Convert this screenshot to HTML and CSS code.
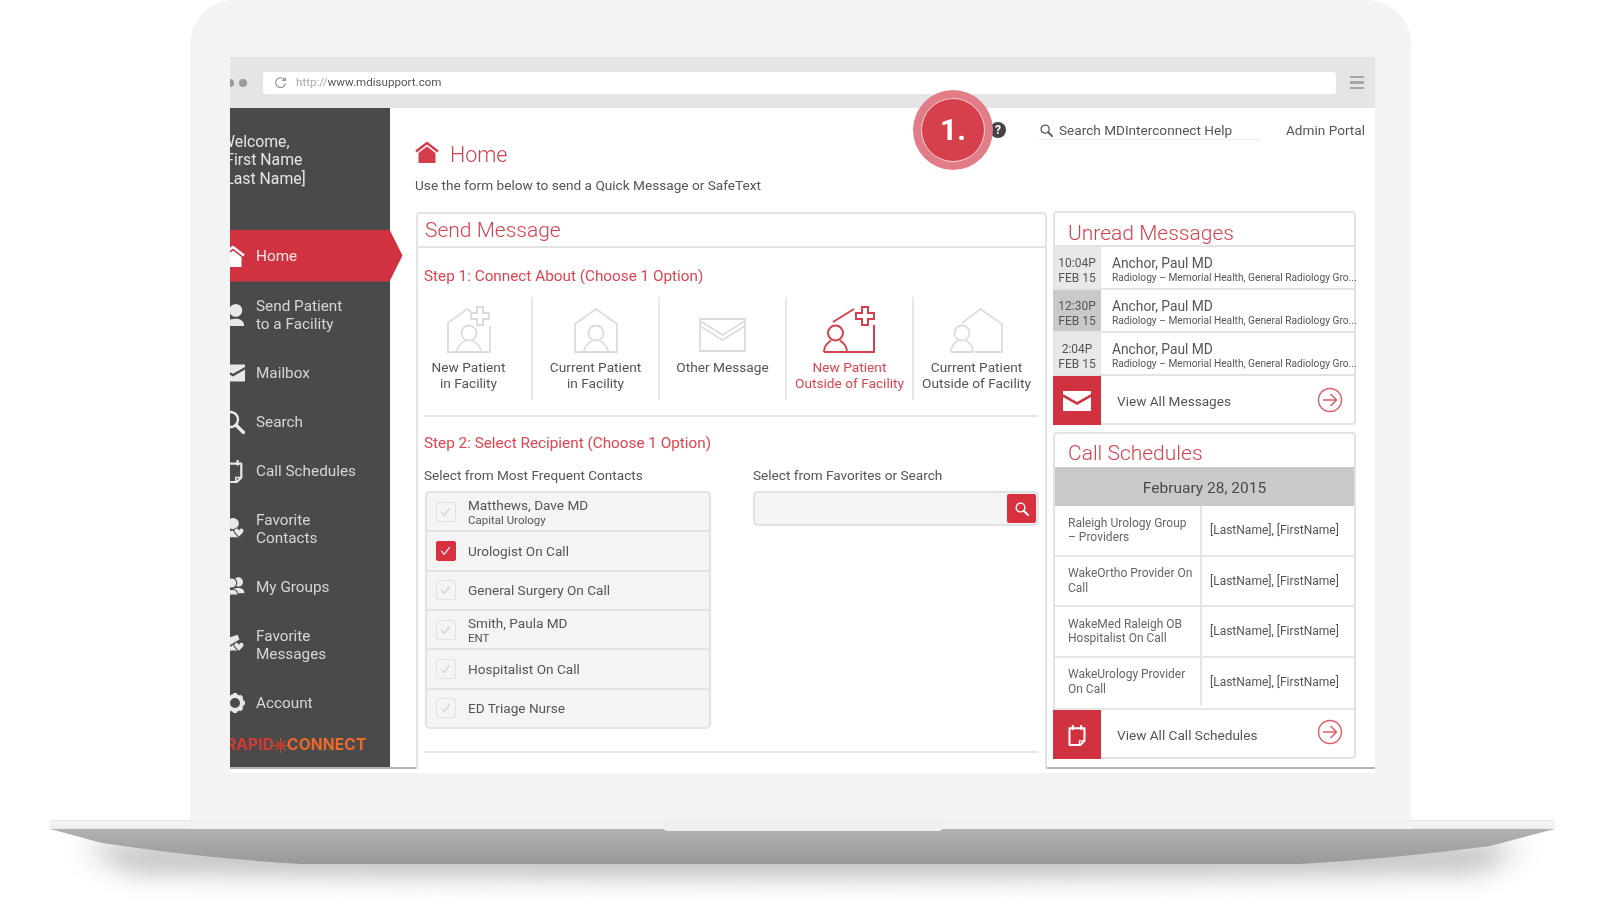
FILE: index.html
```html
<!DOCTYPE html>
<html lang="en">
<head>
<meta charset="utf-8">
<title>MDInterconnect Home</title>
<link rel="stylesheet" href="styles.css">
</head>
<body>
<svg class="defs" aria-hidden="true">
  <symbol id="home" viewBox="0 0 24 22">
    <path d="M1 10.5 12 2l11 8.500" fill="none" stroke="currentColor" stroke-width="2.400"/>
    <path d="M3.500 12 12 5.500l8.500 6.500v10h-17z" fill="currentColor"/>
  </symbol>
  <symbol id="mail" viewBox="0 0 28 20">
    <path d="M0 0h28v3L14 11 0 3z" fill="currentColor"/>
    <path d="M0 6l14 8 14-8v14H0z" fill="currentColor"/>
  </symbol>
  <symbol id="glass" viewBox="0 0 24 24">
    <circle cx="9.500" cy="9.500" r="7.500" fill="none" stroke="currentColor" stroke-width="2.400"/>
    <path d="M15 15l7.500 7.500" stroke="currentColor" stroke-width="3.400" stroke-linecap="round"/>
  </symbol>
  <symbol id="cal" viewBox="0 0 24 26">
    <path d="M3 5h18v15l-5 5H3z" fill="none" stroke="currentColor" stroke-width="2.400" stroke-linejoin="round"/>
    <path d="M7 1v6M17 1v6" stroke="currentColor" stroke-width="2.400"/>
    <path d="M15 25v-5h6" fill="none" stroke="currentColor" stroke-width="1.600"/>
  </symbol>
  <symbol id="go" viewBox="0 0 26 26">
    <circle cx="13" cy="13" r="11.500" fill="none" stroke="currentColor" stroke-width="1.400"/>
    <path d="M6 13h13M13.500 7l6 6-6 6" fill="none" stroke="currentColor" stroke-width="1.400"/>
  </symbol>
  <symbol id="person" viewBox="0 0 24 26">
    <circle cx="15" cy="8" r="7"/>
    <path d="M3 25c0-6 6-8 12-8 4 0 9 1.500 9 8z"/>
  </symbol>
  <symbol id="heart" viewBox="-1 -1 14 13">
    <path d="M6 11 .8 5.500C-1 2.500 1 0 3.200 0 4.500 0 5.500.7 6 1.800 6.500.7 7.500 0 8.800 0 11 0 13 2.500 11.200 5.500z"/>
  </symbol>
  <symbol id="tick" viewBox="0 0 20 20">
    <path d="M5 10.500l3.500 4L15 6" fill="none" stroke="currentColor" stroke-width="1.300"/>
  </symbol>
</svg>

<main class="stage">
  <div class="lid">
    <div class="screen">
      <header class="browser">
        <span class="dot"></span><span class="dot"></span>
        <div class="address">
          <svg class="reload" viewBox="0 0 14 14"><path d="M11.500 4.200A5.300 5.300 0 1 0 12.300 8M12.200 1.500v3.200H9" fill="none" stroke="#8f8f8f" stroke-width="1.200"/></svg>
          <span class="url"><span class="url-scheme">http://</span>www.mdisupport.com</span>
        </div>
        <div class="burger"><i></i><i></i><i></i></div>
      </header>

      <div class="app">
        <div class="side-wrap">
          <aside class="sidebar">
            <p class="welcome">Welcome,<br>[First Name<br>[Last Name]</p>
            <nav class="nav">
              <a class="nav-item active"><svg class="nav-icon"><use href="#home"/></svg><span>Home</span></a>
              <a class="nav-item tall"><svg class="nav-icon"><use href="#person"/></svg><span>Send Patient<br>to a Facility</span></a>
              <a class="nav-item"><svg class="nav-icon mail-nav"><use href="#mail"/></svg><span>Mailbox</span></a>
              <a class="nav-item"><svg class="nav-icon"><use href="#glass"/></svg><span>Search</span></a>
              <a class="nav-item"><svg class="nav-icon"><use href="#cal"/></svg><span>Call Schedules</span></a>
              <a class="nav-item tall"><svg class="nav-icon" viewBox="0 0 26 26"><use href="#person" width="21" height="23"/><use href="#heart" x="13" y="11" width="13" height="12" class="heart"/></svg><span>Favorite<br>Contacts</span></a>
              <a class="nav-item"><svg class="nav-icon" viewBox="0 0 28 24"><use href="#person" x="8" y="0" width="20" height="20"/><use href="#person" width="20" height="23" class="front"/></svg><span>My Groups</span></a>
              <a class="nav-item tall"><svg class="nav-icon" viewBox="0 0 26 24"><path d="M2 6l16-5 2 5-10 6zM2 9l8 5 8-5v9H2z"/><use href="#heart" x="13" y="8" width="13" height="12" class="heart"/></svg><span>Favorite<br>Messages</span></a>
              <a class="nav-item"><svg class="nav-icon" viewBox="0 0 24 24"><circle cx="14" cy="12" r="7" fill="none" stroke="currentColor" stroke-width="4"/><path d="M14 2v4M14 18v4M4 12h4M20 12h4M7 5l3 3M18 16l3 3M7 19l3-3M18 8l3-3" stroke="currentColor" stroke-width="3.600"/></svg><span>Account</span></a>
            </nav>
            <div class="logo">
              <span class="logo-a">RAPID</span>
              <svg class="sun" viewBox="0 0 16 16"><path d="M8 0v16M0 8h16M2.500 2.500l11 11M13.500 2.500l-11 11" stroke="#d9582b" stroke-width="1"/><circle cx="8" cy="8" r="4" fill="#b83a2c"/></svg>
              <span class="logo-b">CONNECT</span>
            </div>
          </aside>
        </div>

        <div class="work">
          <div class="head">
            <div class="intro">
              <div class="page-title"><svg class="title-icon"><use href="#home"/></svg><h1>Home</h1></div>
              <p class="lede">Use the form below to send a Quick Message or SafeText</p>
            </div>
            <div class="tools">
              <span class="help">?</span>
              <div class="help-search"><svg class="help-glass"><use href="#glass"/></svg><span>Search MDInterconnect Help</span></div>
              <span class="admin">Admin Portal</span>
            </div>
          </div>

          <div class="cols">
            <section class="send">
              <h2 class="send-title">Send Message</h2>
              <div class="send-body">
                <h3 class="step first">Step 1: Connect About (Choose 1 Option)</h3>
                <div class="options">
                  <div class="option">
                    <svg class="opt-icon" viewBox="0 0 60 48"><path d="M9 17 28 3l4.500 3M9 17v29h42V20"/><path d="M38 1h6v6h6v6h-6v6h-6v-6h-6V7h6z"/><circle cx="30" cy="27" r="7.500"/><path d="M18 46c0-6 4-9 8.500-11.500M42 46c0-6-4-9-8.500-11.500"/></svg>
                    <p>New Patient<br>in Facility</p>
                  </div>
                  <div class="option">
                    <svg class="opt-icon" viewBox="0 0 60 48"><path d="M9 18 30 3l21 15v28H9z"/><circle cx="30" cy="27" r="7.500"/><path d="M18 46c0-6 4-9 8.500-11.500M42 46c0-6-4-9-8.500-11.500"/></svg>
                    <p>Current Patient<br>in Facility</p>
                  </div>
                  <div class="option">
                    <svg class="opt-icon" viewBox="0 0 60 48"><path d="M7 13h45v32H7z"/><path d="M7 15l22.500 14L52 15M7 20l22.500 14L52 20"/></svg>
                    <p>Other Message</p>
                  </div>
                  <div class="option selected">
                    <svg class="opt-icon" viewBox="0 0 60 48"><path d="M13 16 34 3M54 19v27H27"/><path d="M42 1h6v6h6v6h-6v6h-6v-6h-6V7h6z"/><circle cx="15.500" cy="27" r="7.500"/><path d="M4 46c0-6 3-9 7-11.500M27 46c0-6-3-9-7-11.500M4 46h23"/></svg>
                    <p>New Patient<br>Outside of Facility</p>
                  </div>
                  <div class="option">
                    <svg class="opt-icon" viewBox="0 0 60 48"><path d="M15 17 33.500 3 55 18v28H28"/><circle cx="15" cy="27" r="7.500"/><path d="M4 46c0-6 3-9 7-11.500M26 46c0-6-3-9-7-11.500M4 46h22"/></svg>
                    <p>Current Patient<br>Outside of Facility</p>
                  </div>
                </div>
                <hr class="rule rule-a">
                <h3 class="step second">Step 2: Select Recipient (Choose 1 Option)</h3>
                <div class="pickers">
                  <div class="picker">
                    <p class="pick-label">Select from Most Frequent Contacts</p>
                    <ul class="contacts">
                      <li class="contact"><span class="box"><svg><use href="#tick"/></svg></span><div><p class="c-name">Matthews, Dave MD</p><p class="c-sub">Capital Urology</p></div></li>
                      <li class="contact"><span class="box on"><svg><use href="#tick"/></svg></span><div><p class="c-name">Urologist On Call</p></div></li>
                      <li class="contact"><span class="box"><svg><use href="#tick"/></svg></span><div><p class="c-name">General Surgery On Call</p></div></li>
                      <li class="contact"><span class="box"><svg><use href="#tick"/></svg></span><div><p class="c-name">Smith, Paula MD</p><p class="c-sub">ENT</p></div></li>
                      <li class="contact"><span class="box"><svg><use href="#tick"/></svg></span><div><p class="c-name">Hospitalist On Call</p></div></li>
                      <li class="contact"><span class="box"><svg><use href="#tick"/></svg></span><div><p class="c-name">ED Triage Nurse</p></div></li>
                    </ul>
                  </div>
                  <div class="picker">
                    <p class="pick-label">Select from Favorites or Search</p>
                    <div class="search-field"><button class="search-btn"><svg><use href="#glass"/></svg></button></div>
                  </div>
                </div>
                <hr class="rule rule-b">
              </div>
            </section>

            <div class="right">
              <section class="panel unread">
                <h2 class="panel-title">Unread Messages</h2>
                <div class="msg"><div class="msg-time">10:04P<br>FEB 15</div><div class="msg-text"><p class="m-name">Anchor, Paul MD</p><p class="m-sub">Radiology – Memorial Health, General Radiology Gro...</p></div></div>
                <div class="msg"><div class="msg-time dark">12:30P<br>FEB 15</div><div class="msg-text"><p class="m-name">Anchor, Paul MD</p><p class="m-sub">Radiology – Memorial Health, General Radiology Gro...</p></div></div>
                <div class="msg"><div class="msg-time">2:04P<br>FEB 15</div><div class="msg-text"><p class="m-name">Anchor, Paul MD</p><p class="m-sub">Radiology – Memorial Health, General Radiology Gro...</p></div></div>
                <a class="view-all"><span class="view-icon"><svg class="v-mail"><use href="#mail"/></svg></span><span class="view-text">View All Messages</span><svg class="view-go"><use href="#go"/></svg></a>
              </section>
              <section class="panel calls">
                <h2 class="panel-title">Call Schedules</h2>
                <div class="date-bar">February 28, 2015</div>
                <div class="call"><div class="call-a">Raleigh Urology Group<br>– Providers</div><div class="call-b">[LastName], [FirstName]</div></div>
                <div class="call"><div class="call-a">WakeOrtho Provider On<br>Call</div><div class="call-b">[LastName], [FirstName]</div></div>
                <div class="call"><div class="call-a">WakeMed Raleigh OB<br>Hospitalist On Call</div><div class="call-b">[LastName], [FirstName]</div></div>
                <div class="call"><div class="call-a">WakeUrology Provider<br>On Call</div><div class="call-b">[LastName], [FirstName]</div></div>
                <a class="view-all"><span class="view-icon"><svg class="v-cal"><use href="#cal"/></svg></span><span class="view-text">View All Call Schedules</span><svg class="view-go"><use href="#go"/></svg></a>
              </section>
            </div>
          </div>
        </div>
      </div>

      <div class="badge"><div class="badge-in">1.</div></div>
    </div>
  </div>

  <svg class="base" viewBox="0 0 1600 92">
    <defs>
      <filter id="soft" x="-10%" y="-150%" width="120%" height="400%"><feGaussianBlur stdDeviation="14"/></filter>
      <linearGradient id="under" x1="0" y1="0" x2="0" y2="1"><stop offset="0" stop-color="#b2b2b2"/><stop offset="1" stop-color="#999"/></linearGradient>
      <linearGradient id="lip" x1="0" y1="0" x2="0" y2="1"><stop offset="0" stop-color="#e4e4e4"/><stop offset=".25" stop-color="#f6f6f6"/><stop offset="1" stop-color="#ececec"/></linearGradient>
    </defs>
    <path class="base-shadow" d="M80 25H1525L1480 50Q800 60 130 50z" filter="url(#soft)"/>
    <path d="M50 9L102 23Q200 38 301 44H1300Q1400 38 1490 26L1555 9z" fill="url(#under)"/>
    <rect x="49.500" y="0" width="1505.500" height="9" rx="2" fill="url(#lip)"/>
    <rect x="191" y="0" width="1219" height="9" fill="#f2f2f2"/>
    <path d="M663 0h280v6q0 5-5 5H668q-5 0-5-5z" fill="#efefef"/>
  </svg>
</main>
</body>
</html>
```
FILE: styles.css
```css
* { box-sizing: border-box; }
html, body { margin: 0; padding: 0; background: #fff; }
body { width: 1600px; height: 912px; overflow: hidden; font-family: Roboto, "Liberation Sans", sans-serif; color: #555; }
p, h1, h2, h3, ul { margin: 0; padding: 0; font-weight: 400; }
ul { list-style: none; }
.defs { position: absolute; width: 0; height: 0; }
.stage { display: flex; flex-direction: column; width: 1600px; height: 912px; }

.lid { width: 1221px; height: 820px; margin-left: 190px; padding: 57px 0 0 40px; background: #f3f3f3; border-radius: 44px 44px 0 0; flex: none; }
.screen { position: relative; width: 1145px; height: 716px; overflow: hidden; background: #fff; display: flex; flex-direction: column; filter: blur(.5px); }
.base { display: block; width: 1600px; height: 92px; flex: none; }
.base-shadow { fill: #9a9a9a; opacity: .75; }

.browser { height: 51px; flex: none; display: flex; align-items: center; background: #e5e5e5; }
.dot { width: 8px; height: 8px; border-radius: 50%; background: #9b9b9b; margin-right: 5px; flex: none; }
.dot:first-child { margin-left: -4px; }
.address { width: 1073px; height: 22px; margin-left: 11px; padding-left: 11px; display: flex; align-items: center; gap: 9px; background: #fff; border-radius: 3px; }
.reload { width: 13px; height: 13px; }
.url { font-size: 11.600px; line-height: 20px; height: 21px; color: #555; }
.url-scheme { color: #aaa; }
.burger { width: 14px; margin-left: 14px; display: flex; flex-direction: column; gap: 3px; }
.burger i { display: block; height: 2.500px; background: #a6a6a6; }

.app { flex: 1; display: flex; height: 661px; align-items: flex-start; }
.side-wrap { width: 195px; height: 661px; margin-left: -9px; flex: none; border-bottom: 2px solid #b4b4b4; }
.sidebar { width: 168.500px; height: 659px; background: #4a4a4a; display: flex; flex-direction: column; }
.welcome { padding-top: 24.500px; height: 121.500px; font-size: 15.800px; line-height: 18.800px; color: #e4e4e4; flex: none; }
.nav { display: flex; flex-direction: column; }
.nav-item { display: flex; align-items: center; gap: 11px; height: 49px; font-size: 15.300px; line-height: 18px; color: #d6d6d6; }
.nav-item.tall { height: 67px; }
.nav-item.active { width: calc(100% + 13px); height: 52px; background: #d1323f; color: #f6e3e4; clip-path: polygon(0 0, calc(100% - 13px) 0, 100% 50%, calc(100% - 13px) 100%, 0 100%); }
.nav-icon { width: 24px; height: 24px; flex: none; fill: #e8e8e8; color: #e8e8e8; }
.nav-item.active .nav-icon { color: #fff; }
.mail-nav { height: 18px; }
.heart { fill: #e8e8e8; stroke: #4a4a4a; stroke-width: 1.200px; }
.front { stroke: #4a4a4a; stroke-width: 1.500px; }
.logo { margin-top: 8.500px; margin-left: 5px; display: flex; align-items: center; font-family: Inter, Roboto, sans-serif; font-weight: 700; font-size: 15.500px; line-height: 18px; letter-spacing: .15px; }
.logo-a { color: #d33a35; }
.logo-b { color: #ec6a2c; }
.sun { width: 15px; height: 15px; flex: none; margin: 0 -1px; }

.work { flex: 1; display: flex; flex-direction: column; height: 661px; }
.head { height: 104px; flex: none; display: flex; justify-content: space-between; padding-right: 9px; }
.intro { padding-top: 33px; margin-left: -1px; }
.page-title { display: flex; align-items: flex-start; gap: 11px; height: 22px; }
.title-icon { width: 24px; height: 22px; color: #d43c49; flex: none; }
h1 { font-size: 21.500px; font-weight: 300; color: #d6404d; line-height: 26px; margin-top: 1px; }
.lede { margin-top: 13px; font-size: 13.650px; line-height: 18px; color: #555; }
.tools { display: flex; align-items: center; height: 20px; margin-top: 12px; font-size: 13.600px; color: #555; }
.help { width: 16px; height: 16px; border-radius: 50%; background: #444; color: #fff; font-size: 12px; font-weight: 700; line-height: 16px; text-align: center; margin-right: 33px; }
.help-search { width: 222px; height: 20px; display: flex; align-items: center; gap: 6px; padding-left: 1px; margin-right: 25px; position: relative; }
.help-search::after { content: ""; position: absolute; left: 0; right: 0; top: 19px; height: 1px; background: #efefef; }
.help-glass { width: 13px; height: 13px; color: #555; }
.admin { width: 80px; white-space: nowrap; }

.cols { flex: 1; display: flex; align-items: flex-start; }
.send { width: 631px; height: 557px; flex: none; border: 2px solid #e3e3e3; border-bottom: 0; border-radius: 4px 4px 0 0; }
.send-title { height: 34px; padding-left: 7px; border-bottom: 2px solid #e3e3e3; font-size: 21px; font-weight: 300; color: #d6404d; line-height: 33px; }
.send-body { padding: 0 6px; }
.step { font-size: 15.300px; line-height: 18px; height: 18px; color: #dc4452; white-space: nowrap; }
.step.first { margin-top: 19px; }
.step.second { margin-top: 17px; }
.options { display: grid; grid-template-columns: repeat(5, 127px); height: 103px; margin: 12px 0 0 -20px; }
.option { padding-top: 9px; text-align: center; font-size: 13.700px; line-height: 16px; color: #555; white-space: nowrap; }
.option:first-child { padding-left: 2px; }
.option + .option { border-left: 2px solid #e8e8e8; }
.option p { margin-top: 5px; }
.opt-icon { display: block; width: 60px; height: 48px; margin: 0 auto; fill: none; stroke: #dcdcdc; stroke-width: 1.800; }
.option.selected { color: #dc4452; }
.option.selected .opt-icon { stroke: #d6404d; stroke-width: 2; }
.rule { border: 0; height: 2px; margin: 0; background: #e8e8e8; }
.rule-a { margin-top: 15px; }
.rule-b { margin-top: 22px; }
.pickers { display: grid; grid-template-columns: 287px 286px; column-gap: 42px; margin-top: 15px; }
.pick-label { height: 16px; line-height: 16px; font-size: 13.600px; color: #555; white-space: nowrap; }
.contacts { height: 238px; margin: 8px 0 0 1px; border: 2px solid #e2e2e2; border-radius: 5px; background: #f4f4f5; display: flex; flex-direction: column; }
.contact { flex: 1; display: flex; align-items: center; gap: 12px; padding-left: 9px; }
.contact + .contact { border-top: 2px solid #e2e2e2; }
.box { width: 20px; height: 20px; flex: none; border: 1.500px solid #e2e2e2; border-radius: 2px; color: #cfcfcf; display: block; }
.box svg { display: block; width: 17px; height: 17px; }
.box.on { background: #d7303f; border-color: #d7303f; color: #fff; }
.c-name { font-size: 13.600px; line-height: 16px; }
.c-sub { font-size: 11.500px; line-height: 14px; }
.search-field { height: 35px; margin-top: 8px; border: 2px solid #e2e2e2; border-radius: 5px; background: #f4f4f5; display: flex; justify-content: flex-end; align-items: center; padding-right: 1px; }
.search-btn { width: 29px; height: 29px; padding: 0; border: 0; border-radius: 2px; background: #d7303f; color: #fff; display: flex; align-items: center; justify-content: center; }
.search-btn svg { width: 14px; height: 14px; }

.right { width: 328px; height: 558px; margin-top: -1px; padding: 0 19px 0 6px; flex: none; display: flex; flex-direction: column; gap: 7px; border-bottom: 2px solid #b4b4b4; }
.panel { width: 303px; border: 2px solid #e3e3e3; border-radius: 4px; flex: none; }
.unread { height: 214px; }
.calls { height: 327px; }
.panel-title { height: 34px; padding-left: 13px; font-size: 21px; font-weight: 300; line-height: 40px; color: #d6404d; border-bottom: 2px solid #e3e3e3; white-space: nowrap; }
.calls .panel-title { height: 33px; border-bottom: 0; line-height: 38px; }
.msg { display: flex; height: 43px; margin-left: -2px; border-bottom: 2px solid #e3e3e3; }
.msg-time { width: 48px; flex: none; background: #e8e8e8; text-align: center; font-size: 12px; line-height: 15px; padding-top: 8.500px; color: #555; }
.msg-time.dark { background: #c9c9c9; }
.msg-text { padding: 7.500px 0 0 11px; white-space: nowrap; }
.m-name { font-size: 13.800px; line-height: 16px; }
.m-sub { font-size: 10.200px; line-height: 13px; }
.view-all { display: flex; align-items: center; height: 49px; margin: 0 0 0 -2px; }
.view-icon { width: 48px; height: 49px; flex: none; background: #d1323f; color: #fff; display: flex; align-items: center; justify-content: center; }
.v-mail { width: 28px; height: 20px; }
.v-cal { width: 20px; height: 24px; }
.view-text { margin-left: 16px; font-size: 13.600px; color: #555; flex: 1; }
.view-go { width: 26px; height: 26px; margin: -2px 11px 0 0; color: #e05a66; flex: none; }
.calls .view-go { margin-top: -6px; }
.date-bar { height: 39px; background: #c9c9c9; font-size: 15.500px; line-height: 42px; text-align: center; color: #4a4a4a; }
.call { display: flex; height: 50.500px; border-bottom: 2px solid #e6e6e6; align-items: stretch; }
.call:last-of-type { height: 52.500px; padding-bottom: 2px; }
.call-a { width: 147px; padding-left: 13px; border-right: 2px solid #e6e6e6; display: flex; align-items: center; font-size: 12px; line-height: 14.500px; color: #666; flex: none; white-space: nowrap; }
.call-b { padding-left: 8px; display: flex; align-items: center; font-size: 12px; color: #555; white-space: nowrap; }

.badge { position: absolute; left: 683px; top: 33px; width: 80px; height: 80px; padding: 8px; border-radius: 50%; background: #e27d87; }
.badge-in { width: 64px; height: 64px; border-radius: 50%; border: 1.500px solid #f5d0d4; background: #d6404d; color: #fff; font-size: 30px; font-weight: 700; line-height: 61px; text-align: center; }
```
